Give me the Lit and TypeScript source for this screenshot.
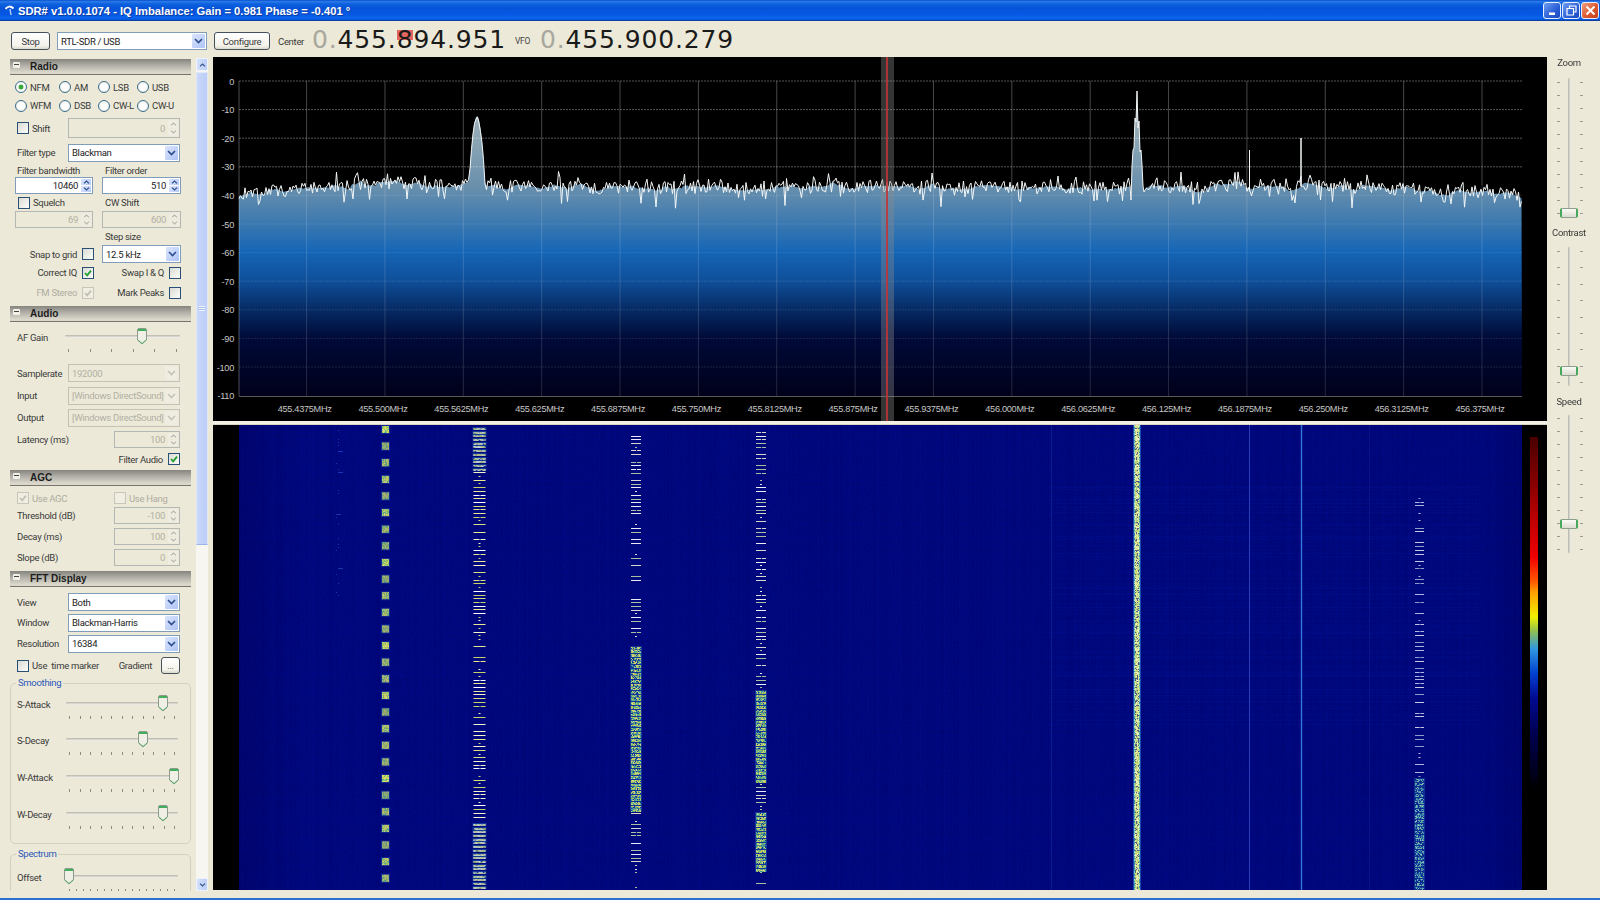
import { LitElement, html, svg, css } from 'lit';
import { customElement } from 'lit/decorators.js';

// small seeded generator so the noise is the same on every load
const seeded = (seed: number) => () => {
  seed = (seed + 0x6d2b79f5) | 0;
  let t = Math.imul(seed ^ (seed >>> 15), 1 | seed);
  t = (t + Math.imul(t ^ (t >>> 7), 61 | t)) ^ t;
  return ((t ^ (t >>> 14)) >>> 0) / 4294967296;
};

const FREQS = [
  '455.4375MHz', '455.500MHz', '455.5625MHz', '455.625MHz', '455.6875MHz', '455.750MHz', '455.8125MHz', '455.875MHz',
  '455.9375MHz', '456.000MHz', '456.0625MHz', '456.125MHz', '456.1875MHz', '456.250MHz', '456.3125MHz', '456.375MHz',
];
const PLOT_LEFT = 239;
const PLOT_RIGHT = 1522;
const GRID_X = (i: number) => 306.6 + i * 78.36;
const GRID_Y = (i: number) => 81 + i * 28.6;

const BASE: [number, number][] = [[239, 194], [385, 183], [600, 188], [900, 186], [1100, 188], [1300, 185], [1450, 191], [1522, 195]];

function baseline(x: number) {
  for (let i = 1; i < BASE.length; i++) {
    if (x <= BASE[i][0]) {
      const [x0, y0] = BASE[i - 1];
      const [x1, y1] = BASE[i];
      return y0 + ((y1 - y0) * (x - x0)) / (x1 - x0);
    }
  }
  return 190;
}

@customElement('sdr-spectrum')
export class SdrSpectrum extends LitElement {
  static styles = css`
    :host { display: block; height: 364px; background: #000; }
    svg { display: block; }
    text { font: 9.2px "Liberation Sans", Arial, sans-serif; fill: #c6c6c6; }
  `;

  private buildTrace() {
    const rnd = seeded(41);
    const line: [number, number][] = [];
    for (let x = PLOT_LEFT; x <= PLOT_RIGHT; x += 1.5) {
      let y = baseline(x) + (rnd() - 0.5) * 13;
      const r = rnd();
      if (r < 0.1) y += 6 + rnd() * 10;
      else if (r < 0.2) y -= 4 + rnd() * 6;
      line.push([x, y]);
    }
    // fill follows a smoothed curve, the white trace dips through it
    const fill = line.map(([x], i) => {
      let sum = 0;
      let n = 0;
      for (let k = Math.max(0, i - 4); k <= Math.min(line.length - 1, i + 4); k++) {
        sum += line[k][1];
        n++;
      }
      return [x, sum / n] as [number, number];
    });

    const peaked = (pts: [number, number][], useFill: boolean) => {
      const out: [number, number][] = [];
      for (const [x, y] of pts) {
        if (x >= 1130 && x <= 1145) continue;
        let v = y;
        if (x > 468 && x < 487) {
          const d = Math.abs(x - 477) / 8;
          v = Math.min(y, 116 + d * d * 66 + (useFill ? 0 : rnd() * 3));
        }
        out.push([x, v]);
      }
      const spike: [number, number][] = [[1130, 186], [1131, 200], [1132, 166], [1133, 150], [1134, 148], [1135, 118], [1136, 122], [1137, 91], [1138, 128], [1139, 121], [1140, 152], [1141, 150], [1142, 165], [1143, 186], [1144, 192], [1145, 190]];
      const idx = out.findIndex(([x]) => x > 1130);
      out.splice(idx, 0, ...spike);
      if (!useFill) {
        for (const [sx, top] of [[1249.5, 150], [1301, 138]]) {
          const j = out.findIndex(([x]) => x > sx);
          const y = out[j][1];
          out.splice(j, 0, [sx, y], [sx, top], [sx, y]);
        }
      }
      return out;
    };
    return { trace: peaked(line, false), area: peaked(fill, true) };
  }

  render() {
    const { trace, area } = this.buildTrace();
    const toPts = (p: [number, number][]) => p.map(([x, y]) => `${x},${y.toFixed(1)}`).join(' ');
    const areaPts = `${PLOT_LEFT},396 ${toPts(area)} ${PLOT_RIGHT},396`;
    return html`
      <svg width="1334" height="364" viewBox="213 57 1334 364">
        <defs>
          <linearGradient id="fft" gradientUnits="userSpaceOnUse" x1="0" y1="100" x2="0" y2="396">
            <stop offset="0" stop-color="#a8b8bc"></stop>
            <stop offset=".29" stop-color="#6a90ac"></stop>
            <stop offset=".42" stop-color="#3a78b0"></stop>
            <stop offset=".513" stop-color="#1565b6"></stop>
            <stop offset=".61" stop-color="#0f4f9a"></stop>
            <stop offset=".71" stop-color="#062a63"></stop>
            <stop offset=".804" stop-color="#000a38"></stop>
            <stop offset="1" stop-color="#00001a"></stop>
          </linearGradient>
        </defs>
        <polygon points=${areaPts} fill="url(#fft)"></polygon>
        ${FREQS.map((_, i) => svg`
          <line x1=${GRID_X(i)} x2=${GRID_X(i)} y1="81" y2="185" stroke="#fff" stroke-opacity=".28"></line>
          <line x1=${GRID_X(i)} x2=${GRID_X(i)} y1="185" y2="396" stroke="#fff" stroke-opacity=".15"></line>`)}
        ${Array.from({ length: 11 }, (_, i) => svg`<line x1="239" x2="1522" y1=${GRID_Y(i)} y2=${GRID_Y(i)} stroke="#fff" stroke-opacity=${i < 4 ? 0.33 : 0.11} stroke-dasharray="2 1"></line>`)}
        <line x1="239" x2="239" y1="81" y2="396" stroke="#fff" stroke-opacity=".3"></line>
        <line x1="239" x2="1522" y1="396.5" y2="396.5" stroke="#5a5a5a"></line>
        <polyline points=${toPts(trace)} fill="none" stroke="#f2f6f6" stroke-width="1"></polyline>
        ${Array.from({ length: 12 }, (_, i) => svg`<text x="234" y=${GRID_Y(i) + 3.5} text-anchor="end">${i === 0 ? '0' : -i * 10}</text>`)}
        ${FREQS.map((f, i) => svg`<text x=${GRID_X(i) - 2} y="411.5" text-anchor="middle">${f}</text>`)}
        <rect x="881" y="57" width="13" height="364" fill="#8c8c8c" fill-opacity=".38"></rect>
        <rect x="886" y="57" width="2" height="364" fill="#c23434" fill-opacity=".85"></rect>
      </svg>
    `;
  }
}

type Range = [number, number, number];

@customElement('sdr-waterfall')
export class SdrWaterfall extends LitElement {
  static styles = css`
    :host { display: flex; height: 465px; background: #000; padding-left: 26px; box-sizing: border-box; }
    canvas { display: block; width: 1283px; height: 465px; }
    .scale {
      width: 8px;
      height: 353px;
      margin: 12px 0 0 8px;
      background: linear-gradient(#4a0000, #8c0000 14%, #d40000 28%, #f00000 34%, #ff5a00 41%, #ffa000 44%, #f0f000 51%, #90c050 55%, #3098e0 60%, #0040d0 67%, #000a90 74%, #000050 84%, #000018 96%, #000);
    }
  `;

  firstUpdated() {
    const cv = this.renderRoot.querySelector('canvas') as HTMLCanvasElement;
    const g = cv.getContext('2d')!;
    const W = cv.width;
    const H = cv.height;
    const rnd = seeded(7);
    const img = g.createImageData(W, H);
    const cols = Array.from({ length: W }, () => (rnd() - 0.5) * 7);
    const rows = Array.from({ length: H }, () => (rnd() - 0.5) * 5);
    for (let y = 0; y < H; y++) {
      for (let x = 0; x < W; x++) {
        const i = (y * W + x) * 4;
        const pageX = x + PLOT_LEFT;
        let band = 0;
        if (pageX > 1050 && pageX < 1480 && y > 60 && y < 300) band = Math.max(0, rows[y]) * 2.4;
        const edge = pageX < 300 ? (300 - pageX) * 0.2 : pageX > 1480 ? (pageX - 1480) * 0.28 : 0;
        const n = (rnd() - 0.5) * 10;
        img.data[i] = 0;
        img.data[i + 1] = 7 + n * 0.3 + cols[x] * 0.4 + band * 0.6 - edge * 0.2;
        img.data[i + 2] = 124 + n + cols[x] + rows[y] + band - edge;
        img.data[i + 3] = 255;
      }
    }
    g.putImageData(img, 0, 0);

    const px = (x: number) => x - PLOT_LEFT;
    const py = (y: number) => y - 425;
    const hot = ['#f4f6c8', '#d9df7c', '#c4d468', '#ffffff', '#e8e890'];
    const carrier = ['#d8d880', '#c8d870', '#e8e8a0', '#a0c880', '#f0f0c0'];
    const green = ['#b8cf5a', '#7fc070', '#d8d860', '#58b090', '#e4e480', '#3f98a0'];
    const square = ['#c4d45a', '#8cc468', '#dcd85c', '#68b888', '#e4e070'];
    const teal = ['#68c8b8', '#40a0b0', '#90d0a0', '#b0e0c0', '#3088b0'];

    // faint traces
    for (let y = 430; y < 600; y += 3) {
      if (rnd() < 0.35) {
        g.fillStyle = '#1c34b0';
        g.fillRect(px(338) - (rnd() < 0.3 ? 2 : 0), py(y), rnd() < 0.3 ? 5 : 1, 1);
      }
    }
    g.fillStyle = 'rgba(40,80,190,.3)';
    g.fillRect(px(1051), 0, 1, H);
    g.fillStyle = 'rgba(40,80,190,.18)';
    g.fillRect(px(1369), 0, 1, H);

    // carriers
    g.fillStyle = '#2440bc';
    g.fillRect(px(1249), 0, 1, H);
    g.fillStyle = '#3a80d8';
    g.fillRect(px(1301), 0, 1, H);
    g.fillStyle = 'rgba(40,90,210,.25)';
    g.fillRect(px(1300), 0, 3, H);

    // the square keyed signal
    for (let y = 426; y < 893; y += 16.62) {
      g.fillStyle = 'rgba(30,70,170,.55)';
      g.fillRect(px(381), py(y) - 1, 9, 9);
      for (let a = 0; a < 7; a++) {
        for (let b = 0; b < 7; b++) {
          g.fillStyle = square[Math.floor(rnd() * square.length)];
          g.fillRect(px(382) + a, py(y) + b, 1, 1);
        }
      }
    }

    // continuous strong carrier
    for (let y = 0; y < H; y++) {
      for (let a = -4; a <= 3; a++) {
        const edge = Math.abs(a + 0.5);
        g.fillStyle = edge > 3 ? '#1a48b0' : edge > 2 ? teal[Math.floor(rnd() * teal.length)] : rnd() < 0.18 ? '#506080' : carrier[Math.floor(rnd() * carrier.length)];
        g.fillRect(px(1137) + a, y, 1, 1);
      }
    }

    const burst = (cx: number, w: number, top: number, dense: Range[], sparseCol: string[], denseCol: string[], sparseRate = 0.7, rowH = 3, alpha = 1) => {
      g.globalAlpha = alpha;
      for (let y = top; y < 889; y += 3.7) {
        const inDense = dense.find(([a, b]) => y >= a && y < b);
        const yy = Math.round(py(y));
        if (inDense) {
          g.fillStyle = 'rgba(30,90,170,.6)';
          g.fillRect(px(cx) - w / 2 - 1, yy - 1, w + 2, rowH + 1);
          for (let a = 0; a < w; a++) {
            for (let b = 0; b < rowH; b++) {
              if (rnd() < inDense[2]) {
                g.fillStyle = denseCol[Math.floor(rnd() * denseCol.length)];
                g.fillRect(px(cx) - w / 2 + a, yy + b, 1, 1);
              }
            }
          }
        } else if (rnd() < sparseRate) {
          const r = rnd();
          g.fillStyle = sparseCol[Math.floor(rnd() * sparseCol.length)];
          if (r < 0.22) g.fillRect(px(cx) - 1, yy, 2, 1);
          else {
            g.fillRect(px(cx) - w / 2, yy, w, 1);
            if (r > 0.8) {
              g.fillStyle = '#101c90';
              g.fillRect(px(cx), yy, 1, 1);
            }
          }
        }
      }
      g.globalAlpha = 1;
    };
    const pale = ['#ffffff', '#e8e8d0', '#b8d0a0'];
    burst(479.5, 12, 428, [[428, 472, 0.85], [822, 889, 0.9]], hot, hot, 0.88, 2);
    burst(636, 10, 432, [[643, 692, 0.8], [692, 810, 0.88]], pale, green, 0.7, 3, 0.92);
    burst(761, 10, 432, [[689, 780, 0.9], [812, 872, 0.9]], pale, green, 0.7, 3, 0.92);
    burst(1419.5, 9, 498, [[777, 889, 0.62]], ['#e0e8f8', '#b8c8e0', '#ffffff'], teal, 0.66, 3, 0.78);
  }

  render() {
    return html`<canvas width="1283" height="465"></canvas><div class="scale"></div>`;
  }
}

const chevron = html`<svg width="9" height="6" viewBox="0 0 9 6"><path d="M1 1 L4.5 4.5 L8 1" fill="none" stroke="currentColor" stroke-width="1.6"></path></svg>`;
const chevUp = html`<svg width="7" height="4" viewBox="0 0 7 4"><path d="M1 3.4 L3.5 1 L6 3.4" fill="none" stroke="currentColor" stroke-width="1.2"></path></svg>`;
const chevDown = html`<svg width="7" height="4" viewBox="0 0 7 4"><path d="M1 .6 L3.5 3 L6 .6" fill="none" stroke="currentColor" stroke-width="1.2"></path></svg>`;
const tick = html`<svg width="10" height="10" viewBox="0 0 10 10"><path d="M2 5 L4.2 7.4 L8 2.6" fill="none" stroke="currentColor" stroke-width="1.8"></path></svg>`;
const thumbSvg = html`<svg class="thumb-shape" width="10" height="17" viewBox="0 0 10 17">
  <path d="M.5 2 Q.5 .5 2 .5 H8 Q9.5 .5 9.5 2 V12 L5 16 L.5 12 Z" fill="#efefe6" stroke="#8b9a8b"></path>
  <rect x="1" y="1" width="8" height="2" fill="#42ad5c"></rect>
  <path d="M1 12 L5 15.5 L9 12" fill="none" stroke="#52a868" stroke-width="1"></path>
</svg>`;

const combo = (text: string, cls = '') => html`<div class="combo ${cls}"><span class="val">${text}</span><span class="drop">${chevron}</span></div>`;
const spin = (text: string, cls = '') => html`<div class="spin ${cls}"><span class="val">${text}</span><span class="arrows"><i>${chevUp}</i><i>${chevDown}</i></span></div>`;
const check = (on = false, cls = '') => html`<span class="check ${cls}">${on ? tick : ''}</span>`;
const radio = (text: string, on = false) => html`<label class="radio"><span class="dot ${on ? 'on' : ''}"></span>${text}</label>`;
const head = (text: string) => html`<div class="head"><span class="box"></span>${text}</div>`;

const slider = (thumb: number, ticks: number, cls = '', span = 105) => html`
  <div class="slider ${cls}">
    <div class="groove"></div>
    ${Array.from({ length: ticks }, (_, i) => html`<i class="tk" style="left:${4 + (i * span) / (ticks - 1)}px"></i>`)}
    <span class="thumb" style="left:${thumb - 5}px">${thumbSvg}</span>
  </div>`;

const vslider = (cls: string, ticks: number[], thumb: number) => html`
  <div class="vslider ${cls}">
    <div class="vgroove"></div>
    ${ticks.map((t) => html`<i class="vtk l" style="top:${t}px"></i><i class="vtk r" style="top:${t}px"></i>`)}
    <span class="vthumb" style="top:${thumb - 5}px"></span>
  </div>`;

@customElement('app-root')
export class AppRoot extends LitElement {
  static styles = css`
    :host {
      display: flex;
      flex-direction: column;
      width: 1600px;
      height: 900px;
      overflow: hidden;
      background: #ece9d8;
      font: 9.5px Roboto, "Liberation Sans", Arial, sans-serif;
      letter-spacing: -.3px;
      color: #3a3a3a;
    }

    .title {
      display: flex;
      align-items: center;
      height: 21px;
      flex: none;
      padding: 0 1px 0 5px;
      background: linear-gradient(#0a4fd0, #2a7ce8 8%, #0f62e0 18%, #0553d8 40%, #0658e4 70%, #0a64ee 84%, #0450cc 100%);
      color: #fff;
      font: bold 11.2px "Liberation Sans", Arial, sans-serif;
      letter-spacing: 0;
      box-shadow: inset 0 -1px 0 #0a3fa8;
    }
    .title .icon { margin-right: 4px; flex: none; }
    .title .caption { flex: 1; text-shadow: 1px 1px 0 #0a3aa0; }
    .winbtn {
      width: 18px;
      height: 17px;
      margin-left: 1px;
      border: 1px solid #e8eefc;
      border-radius: 3px;
      box-sizing: border-box;
      display: flex;
      align-items: center;
      justify-content: center;
      background: linear-gradient(135deg, #6e9cf0, #2a5fd8 60%, #1c48c0);
    }
    .winbtn.close { background: linear-gradient(135deg, #f0a080, #dc5a30 55%, #c03c18); }

    .toolbar {
      display: flex;
      align-items: center;
      flex: none;
      height: 36px;
      padding: 4px 0 0 11px;
      box-sizing: border-box;
    }
    .btn {
      display: flex;
      align-items: center;
      justify-content: center;
      height: 18px;
      box-sizing: border-box;
      border: 1px solid #45525e;
      border-radius: 3px;
      background: linear-gradient(#fff, #f3f2ea 80%, #dcd9c8);
    }
    .stop { width: 39px; }
    .configure { width: 56px; margin-left: 7px; }
    .source { width: 150px; margin-left: 7px; }
    .center-lbl { margin-left: 8px; width: 34px; }
    .vfo-lbl { margin-left: 11px; width: 25px; font-size: 8.5px; color: #444; }
    .freq {
      font: 25px "DejaVu Sans ExtraLight", "DejaVu Sans", Verdana, sans-serif;
      letter-spacing: .85px;
      line-height: 30px;
      margin-top: -3px;
      color: #1a1a1a;
      white-space: nowrap;
    }
    .freq.first { width: 192px; }
    .freq .dim { color: #a8a89e; }
    .freq .hit {
      background: linear-gradient(#e4655f, #e4655f) no-repeat 0 5px / 100% 10px;
    }

    .body { display: flex; flex: none; height: 841px; }
    .side { display: flex; flex: none; width: 213px; padding-left: 10px; box-sizing: border-box; }
    .panel { width: 181px; height: 832px; margin-top: 2px; overflow: hidden; flex: none; }
    .scroll {
      display: flex;
      flex-direction: column;
      width: 12px;
      height: 833px;
      margin: 1px 0 0 5px;
      background: #f7f6f1;
    }
    .sb {
      display: flex;
      align-items: center;
      justify-content: center;
      flex: none;
      height: 13px;
      color: #33528c;
      background: linear-gradient(90deg, #d4e0fb, #bccff6);
      border: 1px solid #eef2fc;
      border-radius: 2px;
      box-sizing: border-box;
    }
    .sb-thumb {
      display: flex;
      align-items: center;
      justify-content: center;
      flex: none;
      height: 473px;
      margin-top: 1px;
      background: linear-gradient(90deg, #c9d8fa, #bccdf8);
      border: 1px solid #e2e8f8;
      border-bottom-color: #9fb4e4;
      box-sizing: border-box;
    }
    .grip { width: 6px; height: 5px; background: repeating-linear-gradient(#eef3fe 0 1px, #a9bfe8 1px 2px); }
    .sb-rest { flex: 1; }

    .main { width: 1334px; flex: none; }
    .gap { height: 4px; background: #f3f1e6; border-bottom: 1px solid #d8d5c4; box-sizing: border-box; }

    .right {
      display: flex;
      flex-direction: column;
      align-items: center;
      width: 53px;
      flex: none;
      padding-right: 9px;
      box-sizing: border-box;
    }
    .rl { height: 12px; line-height: 12px; white-space: nowrap; }
    .vslider { position: relative; width: 30px; margin: 8px 0; }
    .vslider.zoom { height: 140px; margin: 9px 0; }
    .vslider.contrast { height: 139px; margin-bottom: 10px; }
    .vslider.speed { height: 138px; margin-top: 7px; }
    .vgroove {
      position: absolute;
      left: 14px;
      top: 0;
      bottom: 0;
      width: 3px;
      background: linear-gradient(90deg, #b4b2a8, #f4f3ec);
      border-radius: 1px;
    }
    .vtk { position: absolute; width: 3px; height: 1px; background: #9a9a90; }
    .vtk.l { left: 3px; }
    .vtk.r { left: 26px; }
    .vthumb {
      position: absolute;
      left: 6px;
      width: 18px;
      height: 10px;
      box-sizing: border-box;
      border: 1px solid #8f9f8f;
      border-left: 2px solid #46a85c;
      border-right: 2px solid #46a85c;
      border-radius: 2px;
      background: linear-gradient(#fafaf4, #dcdbd0);
    }

    .footer { flex: none; height: 2px; background: #2a6ed0; }

    /* sidebar */
    .head {
      display: flex;
      align-items: center;
      height: 16px;
      box-sizing: border-box;
      padding-left: 3px;
      background: linear-gradient(#85847e, #b3b1a9 45%, #dbd8cb 90%);
      border-bottom: 1px solid #77766e;
      font: bold 10px "Liberation Sans", Arial, sans-serif;
      letter-spacing: 0;
      color: #1c1c1c;
    }
    .box {
      display: flex;
      align-items: center;
      justify-content: center;
      width: 7px;
      height: 6px;
      margin-right: 10px;
      background: linear-gradient(#44433f 0 0) no-repeat center / 5px 1px, #f0efe8;
      border-radius: 1px;
      margin-top: -4px;
    }

    .row {
      display: flex;
      align-items: center;
      justify-content: space-between;
      padding: 0 11px 0 7px;
      white-space: nowrap;
    }
    .cols-radio { display: grid; grid-template-columns: 44px 39px 39px 1fr; align-items: center; padding-left: 5px; }
    .cols { display: grid; grid-template-columns: 88px 1fr; align-items: center; padding-left: 7px; white-space: nowrap; }
    .cols.inputs { grid-template-columns: 87px 1fr; padding: 0 10px 0 5px; }
    .cols.inputs .spin { width: 78px; }
    .cols.inputs .spin + .spin { width: 79px; }
    .cols.shifted { grid-template-columns: 87px 1fr; padding-left: 8px; }
    .cols.right-pair { grid-template-columns: 84px 1fr; column-gap: 8px; padding: 0 10px 0 0; }
    .cols.agc { grid-template-columns: 97px 1fr; }
    .end { display: flex; align-items: center; justify-content: flex-end; gap: 5px; }
    .group { display: flex; align-items: center; gap: 3px; }
    .radio { display: flex; align-items: center; gap: 3px; }
    .off { color: #aeaca0; }

    .h13 { height: 13px; } .h16 { height: 16px; } .h17 { height: 17px; } .h18 { height: 18px; }
    .h19 { height: 19px; } .h20 { height: 20px; } .h21 { height: 21px; } .h22 { height: 22px; }
    .h23 { height: 23px; } .h26 { height: 26px; }
    .mt1 { margin-top: 1px; } .mt2 { margin-top: 2px; } .mt3 { margin-top: 3px; } .mt4 { margin-top: 4px; }
    .mt5 { margin-top: 5px; } .mt7 { margin-top: 7px; } .mt9 { margin-top: 9px; } .mt10 { margin-top: 10px; }
    .mt11 { margin-top: 11px; }

    .dot {
      width: 12px;
      height: 12px;
      box-sizing: border-box;
      border: 1px solid #3a6d8c;
      border-radius: 50%;
      background: radial-gradient(#fff 40%, #dcdcd4);
    }
    .dot.on { background: radial-gradient(#3aa83a 0 30%, #e8f4e8 38%, #fff 60%, #dcdcd4); }

    .check {
      display: inline-flex;
      align-items: center;
      justify-content: center;
      flex: none;
      width: 12px;
      height: 12px;
      box-sizing: border-box;
      border: 1px solid #2a4f74;
      background: linear-gradient(135deg, #dcdcd6, #fbfbf8);
      color: #22a030;
    }
    .check.dis { border-color: #c8c6b8; background: #f0eee2; color: #c2c0b4; }

    .combo {
      display: flex;
      align-items: center;
      height: 18px;
      box-sizing: border-box;
      padding: 0 1px 0 3px;
      border: 1px solid #7f9db9;
      background: #fff;
      color: #222;
    }
    .combo .val { flex: 1; overflow: hidden; white-space: nowrap; }
    .drop {
      display: flex;
      align-items: center;
      justify-content: center;
      flex: none;
      width: 13px;
      height: 14px;
      border-radius: 1px;
      color: #2b4c8c;
      background: linear-gradient(135deg, #dbe5fc, #aec4f6);
    }
    .combo.w112 { width: 112px; }
    .combo.w79 { width: 79px; }
    .combo.dis { border-color: #c4c2b4; background: #ece9d8; color: #b2b0a4; }
    .combo.dis .drop { background: #efede2; color: #c4c2b6; }

    .spin {
      display: flex;
      align-items: center;
      height: 17px;
      box-sizing: border-box;
      padding-left: 3px;
      border: 1px solid #7f9db9;
      background: #fff;
      color: #222;
    }
    .spin .val { flex: 1; text-align: right; padding-right: 2px; }
    .spin.w112 { width: 112px; height: 20px; }
    .spin.w66 { width: 66px; }
    .arrows { display: flex; flex-direction: column; flex: none; width: 12px; height: 100%; padding: 1px; box-sizing: border-box; gap: 1px; }
    .arrows i {
      flex: 1;
      display: flex;
      align-items: center;
      justify-content: center;
      color: #2b4c8c;
      background: linear-gradient(135deg, #dbe5fc, #b8cbf6);
    }
    .spin.dis { border-color: #b4b8b4; background: #ece9d8; color: #b2b0a4; }
    .spin.dis .arrows i { background: #efede2; color: #b8b6aa; }

    .gradient-btn { width: 19px; height: 17px; margin-left: 6px; color: #555; }

    .slider { position: relative; width: 113px; height: 26px; flex: none; }
    .slider.wide { width: 116px; }
    .row.sl { justify-content: flex-start; padding-right: 0; }
    .row.sl .name { width: 48px; margin-top: -5px; }
    .row.sl .name.af { width: 47px; }
    .groove {
      position: absolute;
      left: 1px;
      right: 0;
      top: 8px;
      height: 3px;
      background: linear-gradient(#b6b4aa, #f6f5ee);
      border-radius: 1px;
    }
    .tk { position: absolute; top: 22px; width: 1px; height: 3px; background: #8c8c84; }
    .thumb { position: absolute; top: 1px; height: 17px; }
    .thumb-shape { display: block; }

    fieldset {
      margin: 0;
      padding: 0;
      border: 1px solid #d3d0bf;
      border-radius: 5px;
      min-width: 0;
      box-sizing: border-box;
    }
    fieldset.smooth { height: 167px; }
    fieldset.spectrum { height: 60px; margin-top: 4px; }
    legend {
      padding: 0 2px;
      margin-left: 5px;
      line-height: 12px;
      color: #2c58b8;
    }
    fieldset .row { padding-left: 6px; }
  `;

  private renderRadio() {
    return html`
      ${head('Radio')}
      <div class="cols-radio h18 mt3">${radio('NFM', true)}${radio('AM')}${radio('LSB')}${radio('USB')}</div>
      <div class="cols-radio h19">${radio('WFM')}${radio('DSB')}${radio('CW-L')}${radio('CW-U')}</div>
      <div class="row h26">
        <span class="group">${check()}Shift</span>
        ${spin('0', 'w112 dis')}
      </div>
      <div class="row h23"><span>Filter type</span>${combo('Blackman', 'w112')}</div>
      <div class="cols h13"><span>Filter bandwidth</span><span>Filter order</span></div>
      <div class="cols inputs h17">${spin('10460')}${spin('510')}</div>
      <div class="cols shifted h17"><span class="group">${check()}Squelch</span><span>CW Shift</span></div>
      <div class="cols inputs h17">${spin('69', 'dis')}${spin('600', 'dis')}</div>
      <div class="cols h17"><span></span><span>Step size</span></div>
      <div class="cols right-pair h16">
        <span class="end">Snap to grid ${check()}</span>
        ${combo('12.5 kHz', 'w79')}
      </div>
      <div class="cols right-pair h23">
        <span class="end">Correct IQ ${check(true)}</span>
        <span class="end">Swap I &amp; Q ${check()}</span>
      </div>
      <div class="cols right-pair h17">
        <span class="end off">FM Stereo ${check(true, 'dis')}</span>
        <span class="end">Mark Peaks ${check()}</span>
      </div>
    `;
  }

  private renderAudio() {
    return html`
      <div class="mt5">${head('Audio')}</div>
      <div class="row sl h26 mt5"><span class="name af">AF Gain</span>${slider(78, 6, 'wide', 108)}</div>
      <div class="row h22 mt9"><span>Samplerate</span>${combo('192000', 'w112 dis')}</div>
      <div class="row h23"><span>Input</span>${combo('[Windows DirectSound]', 'w112 dis')}</div>
      <div class="row h21"><span>Output</span>${combo('[Windows DirectSound]', 'w112 dis')}</div>
      <div class="row h22"><span>Latency (ms)</span>${spin('100', 'w66 dis')}</div>
      <div class="row h18"><span></span><span class="end">Filter Audio ${check(true)}</span></div>
    `;
  }

  private renderAgc() {
    return html`
      <div class="mt2">${head('AGC')}</div>
      <div class="cols agc h16 mt4">
        <span class="group off">${check(true, 'dis')}Use AGC</span>
        <span class="group off">${check(false, 'dis')}Use Hang</span>
      </div>
      <div class="row h19"><span>Threshold (dB)</span>${spin('-100', 'w66 dis')}</div>
      <div class="row h21 mt1"><span>Decay (ms)</span>${spin('100', 'w66 dis')}</div>
      <div class="row h21"><span>Slope (dB)</span>${spin('0', 'w66 dis')}</div>
    `;
  }

  private renderFft() {
    return html`
      <div class="mt3">${head('FFT Display')}</div>
      <div class="row h20 mt5"><span>View</span>${combo('Both', 'w112')}</div>
      <div class="row h21"><span>Window</span>${combo('Blackman-Harris', 'w112')}</div>
      <div class="row h21"><span>Resolution</span>${combo('16384', 'w112')}</div>
      <div class="row h23">
        <span class="group">${check()}Use&nbsp; time marker</span>
        <span class="group">Gradient <span class="btn gradient-btn">...</span></span>
      </div>
      <fieldset class="smooth">
        <legend>Smoothing</legend>
        <div class="row sl h26 mt5"><span class="name">S-Attack</span>${slider(98, 11)}</div>
        <div class="row sl h26 mt10"><span class="name">S-Decay</span>${slider(78, 11)}</div>
        <div class="row sl h26 mt11"><span class="name">W-Attack</span>${slider(109, 11)}</div>
        <div class="row sl h26 mt11"><span class="name">W-Decay</span>${slider(98, 11)}</div>
      </fieldset>
      <fieldset class="spectrum">
        <legend>Spectrum</legend>
        <div class="row sl h26 mt7"><span class="name">Offset</span>${slider(4, 16)}</div>
      </fieldset>
    `;
  }

  render() {
    return html`
      <div class="title">
        <svg class="icon" width="9" height="11" viewBox="0 0 9 11">
          <path d="M.5 4 Q4 -.5 8.5 3.5" fill="none" stroke="#fff" stroke-width="2"></path>
          <path d="M5 4 L6 10" stroke="#b8d0f4" stroke-width="1.4"></path>
        </svg>
        <span class="caption">SDR# v1.0.0.1074 - IQ Imbalance: Gain = 0.981 Phase = -0.401 °</span>
        <span class="winbtn">
          <svg width="11" height="11" viewBox="0 0 11 11"><rect x="2" y="7.5" width="6" height="2.5" fill="#fff"></rect></svg>
        </span>
        <span class="winbtn">
          <svg width="11" height="11" viewBox="0 0 11 11"><path d="M3.5 3 V1 H10 V7 H8 M1 3.5 H7.5 V10 H1 Z" fill="none" stroke="#fff" stroke-width="1.2"></path></svg>
        </span>
        <span class="winbtn close">
          <svg width="11" height="11" viewBox="0 0 11 11"><path d="M1.5 1.5 L9.5 9.5 M9.5 1.5 L1.5 9.5" stroke="#fff" stroke-width="2"></path></svg>
        </span>
      </div>

      <div class="toolbar">
        <span class="btn stop">Stop</span>
        ${combo('RTL-SDR / USB', 'source')}
        <span class="btn configure">Configure</span>
        <span class="center-lbl">Center</span>
        <span class="freq first"><span class="dim">0.</span>455.<span class="hit">8</span>94.951</span>
        <span class="vfo-lbl">VFO</span>
        <span class="freq"><span class="dim">0.</span>455.900.279</span>
      </div>

      <div class="body">
        <div class="side">
          <div class="panel">
            ${this.renderRadio()}
            ${this.renderAudio()}
            ${this.renderAgc()}
            ${this.renderFft()}
          </div>
          <div class="scroll">
            <span class="sb">${chevUp}</span>
            <div class="sb-thumb"><span class="grip"></span></div>
            <div class="sb-rest"></div>
            <span class="sb">${chevDown}</span>
          </div>
        </div>
        <div class="main">
          <sdr-spectrum></sdr-spectrum>
          <div class="gap"></div>
          <sdr-waterfall></sdr-waterfall>
        </div>
        <div class="right">
          <span class="rl">Zoom</span>
          ${vslider('zoom', Array.from({ length: 11 }, (_, i) => 4 + i * 13.1), 135)}
          <span class="rl">Contrast</span>
          ${vslider('contrast', Array.from({ length: 9 }, (_, i) => 4 + i * 16.4), 124)}
          <span class="rl">Speed</span>
          ${vslider('speed', Array.from({ length: 11 }, (_, i) => 3 + i * 13.1), 109)}
        </div>
      </div>
      <div class="footer"></div>
    `;
  }
}
